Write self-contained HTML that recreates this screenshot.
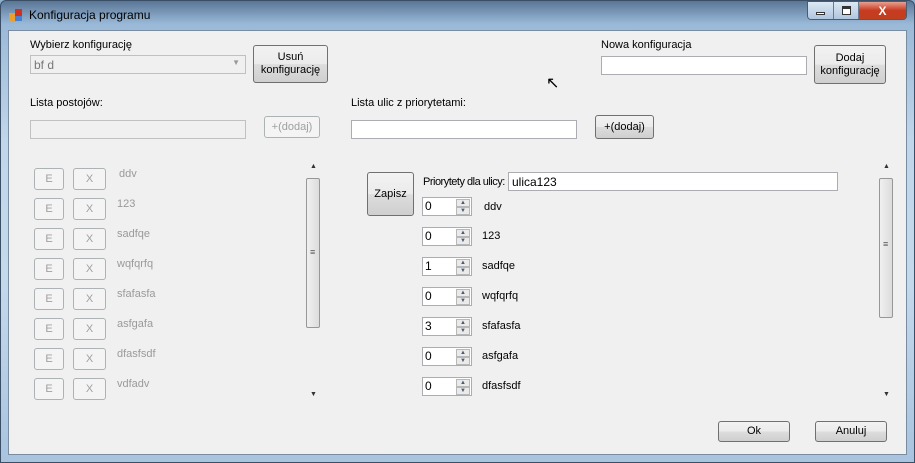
<!DOCTYPE html>
<html><head><meta charset="utf-8"><style>
*{box-sizing:border-box;margin:0;padding:0}
body{width:915px;height:463px;overflow:hidden;font-family:"Liberation Sans",sans-serif;font-size:11px;position:relative;background:#8fb0d0}
.frame{position:absolute;left:0;top:0;width:915px;height:463px;background:linear-gradient(180deg,#5a7696 0%,#9ab9d8 5%,#c0d6ea 30%,#c5d9ec 60%,#a9c4df 100%);border:1px solid #3a4e66;border-radius:6px 6px 0 0}
.client{position:absolute;left:8px;top:30px;width:899px;height:425px;background:#f0f0f0;border:1px solid #7a8ca0}
.a{position:absolute}
.t{position:absolute;color:#000;white-space:nowrap;font-size:11px}
.btn{position:absolute;border:1px solid #707070;border-radius:3px;background:linear-gradient(#f2f2f2 0%,#ebebeb 50%,#dddddd 51%,#cfcfcf 100%);text-align:center;color:#000;display:flex;align-items:center;justify-content:center;line-height:13px;font-size:11px}
.dis{border-color:#adb2b5;background:#f4f4f4;color:#a0a0a0}
.tb{position:absolute;background:#fff;border:1px solid #abadb3;height:19px;padding:2px 3px;font-size:12px}
.tbd{background:#f0f0f0;border-color:#c0c0c0}
.sb{position:absolute;width:16px;background:#f0f0f0}
.thumb{position:absolute;left:1px;width:14px;border:1px solid #979797;border-radius:2px;background:linear-gradient(90deg,#f0f0f0,#dcdcdc)}
.sp{position:absolute;width:50px;height:19px;background:#fff;border:1px solid #abadb3;padding:1px 2px;font-size:12px}
.sp i{position:absolute;right:1px;width:14px;height:8px;border:1px solid #b8b8b8;background:#eaeaea;font-style:normal;font-size:6px;line-height:6px;text-align:center;color:#4a5a70}
.g{color:#9a9a9a}
</style></head><body>
<div class="frame"></div>
<div class="a" style="left:9px;top:8px;width:14px;height:14px"><div class="a" style="left:0;top:5px;width:7px;height:8px;background:#e8a030"></div><div class="a" style="left:6px;top:1px;width:7px;height:7px;background:#d03020"></div><div class="a" style="left:6px;top:8px;width:7px;height:5px;background:#4a7fd0"></div></div>
<div class="t" style="left:29px;top:8px;font-size:12px">Konfiguracja programu</div>
<div class="a" style="left:807px;top:1px;width:100px;height:19px;border:1px solid #4a5a70;border-radius:0 0 4px 4px;overflow:hidden;display:flex">
<div style="width:26px;height:100%;background:linear-gradient(#dce8f4,#b0c6de);border-right:1px solid #6a7a90;position:relative"><div class="a" style="left:8px;top:10px;width:9px;height:3px;background:#fff;border:1px solid #333"></div></div>
<div style="width:25px;height:100%;background:linear-gradient(#dce8f4,#b0c6de);border-right:1px solid #6a7a90;position:relative"><div class="a" style="left:8px;top:4px;width:9px;height:9px;border:1px solid #333;border-top-width:3px;background:#fff"></div></div>
<div style="flex:1;background:linear-gradient(#e8a090,#c83a20 50%,#c04020);color:#fff;font-weight:bold;text-align:center;font-size:12px;line-height:18px">X</div></div>
<div class="client"></div>

<div class="t" style="left:30px;top:39px">Wybierz konfigurację</div>
<div class="tb tbd" style="left:30px;top:55px;width:216px;color:#777">bf d<span style="position:absolute;right:5px;top:2px;font-size:8px;color:#999">▼</span></div>
<div class="btn" style="left:253px;top:45px;width:75px;height:38px">Usuń<br>konfigurację</div>
<div class="t" style="left:601px;top:39px">Nowa konfiguracja</div>
<div class="tb" style="left:601px;top:56px;width:206px"></div>
<div class="btn" style="left:814px;top:45px;width:72px;height:39px">Dodaj<br>konfigurację</div>
<div class="a" style="left:546px;top:73px;font-size:16px;color:#000">↖</div>

<div class="t" style="left:30px;top:97px">Lista postojów:</div>
<div class="tb tbd" style="left:30px;top:120px;width:216px"></div>
<div class="btn dis" style="left:264px;top:116px;width:56px;height:22px">+(dodaj)</div>
<div class="t" style="left:351px;top:97px">Lista ulic z priorytetami:</div>
<div class="tb" style="left:351px;top:120px;width:226px"></div>
<div class="btn" style="left:595px;top:115px;width:59px;height:24px">+(dodaj)</div>

<div class="sb" style="left:305px;top:160px;height:240px"><div class="a" style="left:5px;top:3px;font-size:7px;color:#333">▲</div><div class="thumb" style="top:18px;height:150px"><div class="a" style="left:3px;top:68px;font-size:9px;color:#555">≡</div></div><div class="a" style="left:5px;bottom:2px;font-size:7px;color:#333">▼</div></div>

<div class="btn" style="left:367px;top:172px;width:47px;height:44px">Zapisz</div>
<div class="t" style="left:423px;top:176px;letter-spacing:-0.5px">Priorytety dla ulicy:</div>
<div class="tb" style="left:508px;top:172px;width:330px">ulica123</div>
<div class="sb" style="left:878px;top:160px;height:240px"><div class="a" style="left:5px;top:3px;font-size:7px;color:#333">▲</div><div class="thumb" style="top:18px;height:140px"><div class="a" style="left:3px;top:60px;font-size:9px;color:#555">≡</div></div><div class="a" style="left:5px;bottom:2px;font-size:7px;color:#333">▼</div></div>

<div class="btn" style="left:718px;top:421px;width:72px;height:21px">Ok</div>
<div class="btn" style="left:815px;top:421px;width:72px;height:21px">Anuluj</div>

<div class="btn dis" style="left:34px;top:168px;width:30px;height:22px">E</div><div class="btn dis" style="left:73px;top:168px;width:33px;height:22px">X</div><div class="t g" style="left:119px;top:168px">ddv</div>
<div class="btn dis" style="left:34px;top:198px;width:30px;height:22px">E</div><div class="btn dis" style="left:73px;top:198px;width:33px;height:22px">X</div><div class="t g" style="left:117px;top:198px">123</div>
<div class="btn dis" style="left:34px;top:228px;width:30px;height:22px">E</div><div class="btn dis" style="left:73px;top:228px;width:33px;height:22px">X</div><div class="t g" style="left:117px;top:228px">sadfqe</div>
<div class="btn dis" style="left:34px;top:258px;width:30px;height:22px">E</div><div class="btn dis" style="left:73px;top:258px;width:33px;height:22px">X</div><div class="t g" style="left:117px;top:258px">wqfqrfq</div>
<div class="btn dis" style="left:34px;top:288px;width:30px;height:22px">E</div><div class="btn dis" style="left:73px;top:288px;width:33px;height:22px">X</div><div class="t g" style="left:117px;top:288px">sfafasfa</div>
<div class="btn dis" style="left:34px;top:318px;width:30px;height:22px">E</div><div class="btn dis" style="left:73px;top:318px;width:33px;height:22px">X</div><div class="t g" style="left:117px;top:318px">asfgafa</div>
<div class="btn dis" style="left:34px;top:348px;width:30px;height:22px">E</div><div class="btn dis" style="left:73px;top:348px;width:33px;height:22px">X</div><div class="t g" style="left:117px;top:348px">dfasfsdf</div>
<div class="btn dis" style="left:34px;top:378px;width:30px;height:22px">E</div><div class="btn dis" style="left:73px;top:378px;width:33px;height:22px">X</div><div class="t g" style="left:117px;top:378px">vdfadv</div>

<div class="sp" style="left:422px;top:197px">0<i style="top:1px">▲</i><i style="top:9px">▼</i></div><div class="t" style="left:484px;top:201px">ddv</div>
<div class="sp" style="left:422px;top:227px">0<i style="top:1px">▲</i><i style="top:9px">▼</i></div><div class="t" style="left:482px;top:230px">123</div>
<div class="sp" style="left:422px;top:257px">1<i style="top:1px">▲</i><i style="top:9px">▼</i></div><div class="t" style="left:482px;top:260px">sadfqe</div>
<div class="sp" style="left:422px;top:287px">0<i style="top:1px">▲</i><i style="top:9px">▼</i></div><div class="t" style="left:482px;top:290px">wqfqrfq</div>
<div class="sp" style="left:422px;top:317px">3<i style="top:1px">▲</i><i style="top:9px">▼</i></div><div class="t" style="left:482px;top:320px">sfafasfa</div>
<div class="sp" style="left:422px;top:347px">0<i style="top:1px">▲</i><i style="top:9px">▼</i></div><div class="t" style="left:482px;top:350px">asfgafa</div>
<div class="sp" style="left:422px;top:377px">0<i style="top:1px">▲</i><i style="top:9px">▼</i></div><div class="t" style="left:482px;top:380px">dfasfsdf</div>
</body></html>
